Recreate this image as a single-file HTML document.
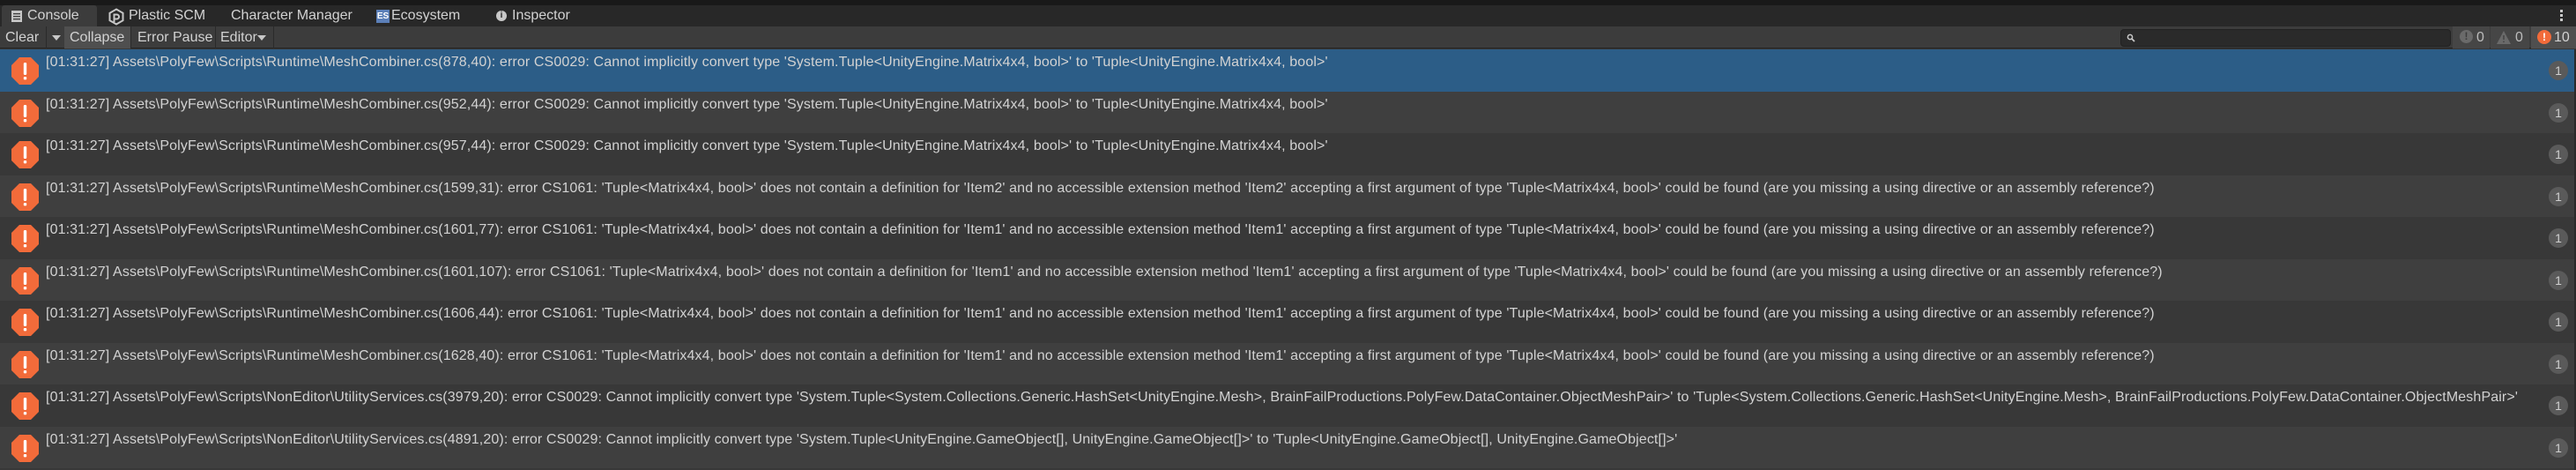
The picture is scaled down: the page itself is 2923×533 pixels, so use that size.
<!DOCTYPE html>
<html><head><meta charset="utf-8"><style>
*{margin:0;padding:0;box-sizing:border-box}
body{width:2923px;height:533px;background:#383838;font-family:"Liberation Sans",sans-serif;color:#d2d2d2;overflow:hidden;position:relative}
.abs{position:absolute}
#top{left:0;top:0;width:2923px;height:6px;background:#191919}
#tabs{left:0;top:6px;width:2923px;height:24px;background:#282828}
.tab{position:absolute;top:0;height:24px;font-size:16px;line-height:24px;white-space:nowrap}
#tb{left:0;top:30px;width:2923px;height:25px;background:#3c3c3c;border-bottom:1px solid #242424}
.t{position:absolute;top:0;height:25px;font-size:16px;line-height:25px;white-space:nowrap}
.sep{position:absolute;top:0;width:1px;height:25px;background:#2a2a2a}
.row{position:absolute;left:0;width:2923px;height:47.5px}
.row .ic{position:absolute;left:12px;top:8px;width:33px;height:33px}
.row .tx{position:absolute;left:52px;top:5px;font-size:16px;letter-spacing:0.12px;line-height:20px;white-space:nowrap;color:#d2d2d2}
.row .bd{position:absolute;left:2892px;top:13px;width:22px;height:22px;border-radius:50%;background:#5a5a5a;color:#d0d0d0;font-size:14px;line-height:22px;text-align:center}
</style></head><body>
<div id="top" class="abs"></div>
<div id="tabs" class="abs">
 <div class="tab" style="left:2px;width:108px;background:#3c3c3c;border-radius:3px 3px 0 0"></div>
 <svg class="abs" style="left:13px;top:6px" width="12" height="13" viewBox="0 0 12 13"><rect x="0" y="0" width="12" height="13" fill="#c8c8c8"/><rect x="2" y="3" width="8" height="1.3" fill="#3c3c3c"/><rect x="2" y="6" width="8" height="1.3" fill="#3c3c3c"/><rect x="2" y="9" width="8" height="1.3" fill="#3c3c3c"/></svg>
 <div class="tab" style="left:31px">Console</div>
 <svg class="abs" style="left:122px;top:3px" width="20" height="20" viewBox="0 0 20 20"><path d="M10 1.5 L17.5 5.8 V14.2 L10 18.5 L2.5 14.2 V5.8 Z" fill="none" stroke="#c8c8c8" stroke-width="2"/><path d="M7.5 16 V7.5 h3 a2.5 2.5 0 0 1 0 5 h-3" fill="none" stroke="#c8c8c8" stroke-width="2"/></svg>
 <div class="tab" style="left:146px">Plastic SCM</div>
 <div class="tab" style="left:262px">Character Manager</div>
 <div class="abs" style="left:427px;top:5px;width:15px;height:15px;background:#5b7fb8;color:#fff;font-size:10px;font-weight:bold;line-height:15px;text-align:center">ES</div>
 <div class="tab" style="left:444px">Ecosystem</div>
 <div class="abs" style="left:563px;top:6px;width:12px;height:12px;border-radius:50%;background:#c8c8c8;color:#282828;font-size:10px;font-weight:bold;line-height:12px;text-align:center">i</div>
 <div class="tab" style="left:581px">Inspector</div>
 <div class="abs" style="left:2905px;top:5px;width:3px;height:3px;background:#c8c8c8;box-shadow:0 5px 0 #c8c8c8,0 10px 0 #c8c8c8"></div>
</div>
<div id="tb" class="abs">
 <div class="t" style="left:6px">Clear</div>
 <div class="sep" style="left:52px"></div>
 <div class="abs" style="left:59px;top:10px;width:0;height:0;border-left:5px solid transparent;border-right:5px solid transparent;border-top:6px solid #c8c8c8"></div>
 <div class="t" style="left:73px;width:75px;background:#4f4f4f"></div>
 <div class="t" style="left:79px">Collapse</div>
 <div class="sep" style="left:148px"></div>
 <div class="t" style="left:156px">Error Pause</div>
 <div class="sep" style="left:244px"></div>
 <div class="t" style="left:250px">Editor</div>
 <div class="abs" style="left:292px;top:10px;width:0;height:0;border-left:5px solid transparent;border-right:5px solid transparent;border-top:6px solid #c8c8c8"></div>
 <div class="sep" style="left:310px"></div>
 <div class="abs" style="left:2406px;top:3px;width:375px;height:20px;background:#2a2a2a;border:1px solid #212121;border-radius:4px"></div>
 <svg class="abs" style="left:2413px;top:8px" width="10" height="10" viewBox="0 0 10 10"><circle cx="4" cy="4" r="2.6" fill="none" stroke="#c8c8c8" stroke-width="1.5"/><path d="M6 6 L9 9" stroke="#c8c8c8" stroke-width="1.8"/></svg>
 <div class="abs" style="left:2783px;top:0;width:42px;height:25px;background:#464646"></div>
 <div class="abs" style="left:2826px;top:0;width:44px;height:25px;background:#464646"></div>
 <div class="abs" style="left:2872px;top:0;width:51px;height:25px;background:#4f4f4f"></div>
 <div class="abs" style="left:2791px;top:4px;width:15px;height:15px;border-radius:50%;background:#6a6a6a;color:#3c3c3c;font-size:12px;font-weight:bold;line-height:15px;text-align:center">!</div>
 <div class="t" style="left:2810px;color:#bdbdbd">0</div>
 <svg class="abs" style="left:2833px;top:5px" width="16" height="15" viewBox="0 0 16 15"><path d="M8 0 L16 15 H0 Z" fill="#6a6a6a"/><rect x="7.2" y="5" width="1.6" height="5" fill="#464646"/><rect x="7.2" y="11.5" width="1.6" height="1.6" fill="#464646"/></svg>
 <div class="t" style="left:2854px;color:#bdbdbd">0</div>
 <div class="abs" style="left:2879px;top:4px;width:16px;height:16px;border-radius:50%;background:#f26b3a;color:#fff;font-size:12px;font-weight:bold;line-height:16px;text-align:center">!</div>
 <div class="t" style="left:2898px">10</div>
</div>
<svg width="0" height="0" style="position:absolute"><defs><g id="err"><path d="M10 1 H23 L32 10 V23 L23 32 H10 L1 23 V10 Z" fill="#f26b3a"/><rect x="14.8" y="7" width="3.4" height="14" rx="1.2" fill="#fff"/><rect x="14.8" y="23" width="3.4" height="3.4" rx="1" fill="#fff"/></g></defs></svg>
<div class="row" style="top:56px;background:#2c5d87"><svg class="ic"><use href="#err"/></svg><div class="tx">[01:31:27] Assets\PolyFew\Scripts\Runtime\MeshCombiner.cs(878,40): error CS0029: Cannot implicitly convert type 'System.Tuple&lt;UnityEngine.Matrix4x4, bool&gt;' to 'Tuple&lt;UnityEngine.Matrix4x4, bool&gt;'</div><div class="bd">1</div></div>
<div class="row" style="top:103.5px;background:#3f3f3f"><svg class="ic"><use href="#err"/></svg><div class="tx">[01:31:27] Assets\PolyFew\Scripts\Runtime\MeshCombiner.cs(952,44): error CS0029: Cannot implicitly convert type 'System.Tuple&lt;UnityEngine.Matrix4x4, bool&gt;' to 'Tuple&lt;UnityEngine.Matrix4x4, bool&gt;'</div><div class="bd">1</div></div>
<div class="row" style="top:151px;background:#383838"><svg class="ic"><use href="#err"/></svg><div class="tx">[01:31:27] Assets\PolyFew\Scripts\Runtime\MeshCombiner.cs(957,44): error CS0029: Cannot implicitly convert type 'System.Tuple&lt;UnityEngine.Matrix4x4, bool&gt;' to 'Tuple&lt;UnityEngine.Matrix4x4, bool&gt;'</div><div class="bd">1</div></div>
<div class="row" style="top:198.5px;background:#3f3f3f"><svg class="ic"><use href="#err"/></svg><div class="tx">[01:31:27] Assets\PolyFew\Scripts\Runtime\MeshCombiner.cs(1599,31): error CS1061: 'Tuple&lt;Matrix4x4, bool&gt;' does not contain a definition for 'Item2' and no accessible extension method 'Item2' accepting a first argument of type 'Tuple&lt;Matrix4x4, bool&gt;' could be found (are you missing a using directive or an assembly reference?)</div><div class="bd">1</div></div>
<div class="row" style="top:246px;background:#383838"><svg class="ic"><use href="#err"/></svg><div class="tx">[01:31:27] Assets\PolyFew\Scripts\Runtime\MeshCombiner.cs(1601,77): error CS1061: 'Tuple&lt;Matrix4x4, bool&gt;' does not contain a definition for 'Item1' and no accessible extension method 'Item1' accepting a first argument of type 'Tuple&lt;Matrix4x4, bool&gt;' could be found (are you missing a using directive or an assembly reference?)</div><div class="bd">1</div></div>
<div class="row" style="top:293.5px;background:#3f3f3f"><svg class="ic"><use href="#err"/></svg><div class="tx">[01:31:27] Assets\PolyFew\Scripts\Runtime\MeshCombiner.cs(1601,107): error CS1061: 'Tuple&lt;Matrix4x4, bool&gt;' does not contain a definition for 'Item1' and no accessible extension method 'Item1' accepting a first argument of type 'Tuple&lt;Matrix4x4, bool&gt;' could be found (are you missing a using directive or an assembly reference?)</div><div class="bd">1</div></div>
<div class="row" style="top:341px;background:#383838"><svg class="ic"><use href="#err"/></svg><div class="tx">[01:31:27] Assets\PolyFew\Scripts\Runtime\MeshCombiner.cs(1606,44): error CS1061: 'Tuple&lt;Matrix4x4, bool&gt;' does not contain a definition for 'Item1' and no accessible extension method 'Item1' accepting a first argument of type 'Tuple&lt;Matrix4x4, bool&gt;' could be found (are you missing a using directive or an assembly reference?)</div><div class="bd">1</div></div>
<div class="row" style="top:388.5px;background:#3f3f3f"><svg class="ic"><use href="#err"/></svg><div class="tx">[01:31:27] Assets\PolyFew\Scripts\Runtime\MeshCombiner.cs(1628,40): error CS1061: 'Tuple&lt;Matrix4x4, bool&gt;' does not contain a definition for 'Item1' and no accessible extension method 'Item1' accepting a first argument of type 'Tuple&lt;Matrix4x4, bool&gt;' could be found (are you missing a using directive or an assembly reference?)</div><div class="bd">1</div></div>
<div class="row" style="top:436px;background:#383838"><svg class="ic"><use href="#err"/></svg><div class="tx">[01:31:27] Assets\PolyFew\Scripts\NonEditor\UtilityServices.cs(3979,20): error CS0029: Cannot implicitly convert type 'System.Tuple&lt;System.Collections.Generic.HashSet&lt;UnityEngine.Mesh&gt;, BrainFailProductions.PolyFew.DataContainer.ObjectMeshPair&gt;' to 'Tuple&lt;System.Collections.Generic.HashSet&lt;UnityEngine.Mesh&gt;, BrainFailProductions.PolyFew.DataContainer.ObjectMeshPair&gt;'</div><div class="bd">1</div></div>
<div class="row" style="top:483.5px;background:#3f3f3f"><svg class="ic"><use href="#err"/></svg><div class="tx">[01:31:27] Assets\PolyFew\Scripts\NonEditor\UtilityServices.cs(4891,20): error CS0029: Cannot implicitly convert type 'System.Tuple&lt;UnityEngine.GameObject[], UnityEngine.GameObject[]&gt;' to 'Tuple&lt;UnityEngine.GameObject[], UnityEngine.GameObject[]&gt;'</div><div class="bd">1</div></div>
<div class="abs" style="left:2921px;top:56px;width:2px;height:477px;background:#2a2a2a"></div>
</body></html>
